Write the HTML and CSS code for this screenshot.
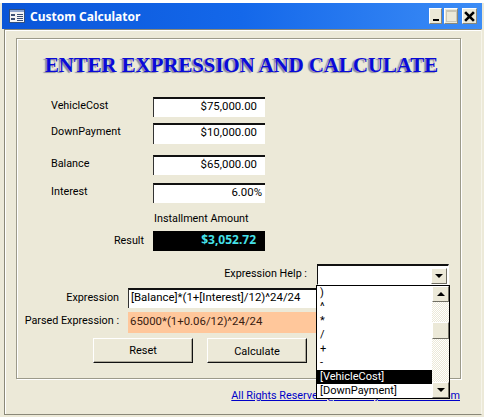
FILE: index.html
```html
<!DOCTYPE html>
<html lang="en">

<head>
    <meta charset="UTF-8">
    <title>Custom Calculator</title>
    <link rel="stylesheet" href="styles.css">
</head>

<body>
    <div class="window">
        <header class="titlebar">
            <svg class="app-icon" width="16" height="14" viewBox="0 0 16 14">
                <rect x="0.5" y="0.5" width="15" height="13" fill="#f4f4f4" stroke="#33507f"></rect>
                <rect x="1" y="1" width="14" height="2" fill="#8fa6cf"></rect>
                <rect x="2" y="5" width="4" height="2" fill="#3c4f74"></rect>
                <rect x="2" y="9" width="4" height="2" fill="#3c4f74"></rect>
                <path d="M8 5.5h6M8 7.5h6M8 9.5h6M8 11.5h6" stroke="#3c4f74" stroke-width="1"></path>
            </svg>
            <span class="title">Custom Calculator</span>
            <div class="caption-btns">
                <span class="cap-btn cap-min"></span>
                <span class="cap-btn cap-max"></span>
                <span class="cap-btn cap-close">
                    <svg width="11" height="11" viewBox="0 0 10 10">
                        <path d="M1 1l8 8M9 1l-8 8" stroke="#000" stroke-width="2.4"></path>
                    </svg>
                </span>
            </div>
        </header>

        <div class="content">
            <main class="frame">
                <h1 class="heading">ENTER EXPRESSION AND CALCULATE</h1>

                <div class="row row-cost">
                    <label class="lbl">VehicleCost</label>
                    <div class="box">$75,000.00</div>
                </div>
                <div class="row row-down">
                    <label class="lbl">DownPayment</label>
                    <div class="box box-tall">$10,000.00</div>
                </div>
                <div class="row row-balance">
                    <label class="lbl">Balance</label>
                    <div class="box">$65,000.00</div>
                </div>
                <div class="row row-interest">
                    <label class="lbl">Interest</label>
                    <div class="box box-pct">6.00%</div>
                </div>

                <div class="caption">Installment Amount</div>
                <div class="row row-result">
                    <label class="lbl lbl-result">Result</label>
                    <div class="result">$3,052.72</div>
                </div>

                <div class="row row-help">
                    <label class="lbl lbl-help">Expression Help :</label>
                    <div class="combo">
                        <div class="combo-text"></div>
                        <span class="scroll-btn combo-btn"><i class="arrow-down"></i></span>
                        <div class="droplist">
                            <ul class="items">
                                <li>)</li>
                                <li>^</li>
                                <li>*</li>
                                <li>/</li>
                                <li>+</li>
                                <li>-</li>
                                <li class="selected">[VehicleCost]</li>
                                <li>[DownPayment]</li>
                            </ul>
                            <div class="scrollbar">
                                <span class="scroll-btn"><i class="arrow-up"></i></span>
                                <div class="track"><span class="thumb"></span></div>
                                <span class="scroll-btn"><i class="arrow-down"></i></span>
                            </div>
                        </div>
                    </div>
                </div>

                <div class="row row-expr">
                    <label class="lbl lbl-expr">Expression</label>
                    <div class="box box-expr">[Balance]*(1+[Interest]/12)^24/24</div>
                </div>
                <div class="row row-parsed">
                    <label class="lbl lbl-expr">Parsed Expression :</label>
                    <div class="parsed">65000*(1+0.06/12)^24/24</div>
                </div>

                <div class="buttons">
                    <button class="btn">Reset</button>
                    <button class="btn btn-calc">Calculate</button>
                </div>
            </main>
            <footer class="rights"><a href="#">All Rights Reserved @ www.mycustomcalc.com</a></footer>
        </div>
    </div>
</body>

</html>
```

FILE: styles.css
```css
* {
    box-sizing: border-box;
}

body {
    margin: 0;
    width: 484px;
    height: 417px;
    overflow: hidden;
    background-color: #fff;
    font-family: Roboto, "Liberation Sans", sans-serif;
    font-size: 10.8px;
    color: #000;
}

.window {
    display: flex;
    flex-direction: column;
    height: 417px;
    padding: 3px 2px 2px;
    background-color: #ece9d8;
    box-shadow: inset 0 3px 0 #fff;
}

.titlebar {
    display: flex;
    align-items: center;
    height: 26px;
    padding: 0 5px 0 7px;
    background: linear-gradient(90deg, #0a55d8 0%, #1468ea 50%, #3c8cf6 100%);
    color: #fff;
}

.app-icon {
    margin-right: 5px;
}

.title {
    font-family: "Noto Sans", sans-serif;
    font-size: 12px;
    font-weight: bold;
}

.caption-btns {
    display: flex;
    gap: 2px;
    margin-left: auto;
}

.cap-btn {
    position: relative;
    display: flex;
    align-items: center;
    justify-content: center;
    width: 15px;
    height: 16px;
    background-color: #ece9d8;
    border: 1px solid;
    border-color: #fff #8a8878 #8a8878 #fff;
}

.cap-min {
    width: 13px;
}

.cap-min::after {
    content: '';
    position: absolute;
    left: 3px;
    bottom: 2px;
    width: 6px;
    height: 2px;
    background-color: #000;
}

.cap-max {
    width: 14px;
}

.cap-max::after {
    content: '';
    width: 9px;
    height: 9px;
    border: 1px solid #c9c6b6;
    border-top-width: 2px;
}

.cap-close {
    margin-left: 2px;
}

.content {
    flex: 1;
    margin: 0 0 0 2px;
    padding: 8px 0 0 11px;
    background-color: #ece9d8;
    border: 1px solid #8a8878;
    border-right-color: #f6f4ea;
    box-shadow: inset 1px 1px 0 #fff;
}

.frame {
    width: 445px;
    height: 341px;
    padding-left: 34px;
    border: 1px solid #9c9a8a;
    box-shadow: inset 1px 1px 0 #fff, 1px 1px 0 #fff;
}

.heading {
    margin: 14px 0 0 -28px;
    height: 24px;
    line-height: 24px;
    text-align: center;
    font-family: "Liberation Serif", serif;
    font-size: 20.8px;
    font-weight: bold;
    color: #0a0ad8;
    text-shadow: -2px 1px 1px #8a8a9c;
    white-space: nowrap;
}

.row {
    display: flex;
    align-items: center;
}

.row-cost {
    margin-top: 20px;
}

.row-down {
    margin-top: 6px;
}

.row-balance {
    margin-top: 11px;
}

.row-interest {
    margin-top: 8px;
}

.row-result {
    margin-top: 5px;
}

.row-help {
    margin-top: 13px;
}

.row-expr {
    margin: 3px 0 0 -34px;
}

.row-parsed {
    margin: 4px 0 0 -34px;
}

.lbl {
    width: 102px;
    margin-top: -4px;
}

.lbl-result {
    flex: none;
    width: 93px;
    margin-top: -2px;
    margin-right: 9px;
    text-align: right;
}

.lbl-help {
    width: 256px;
    margin-top: -3px;
    text-align: right;
}

.lbl-expr {
    flex: none;
    margin-top: -2px;
    text-align: right;
    white-space: nowrap;
}

.row-parsed .lbl-expr {
    margin-top: -5px;
}

.box {
    width: 112px;
    height: 20px;
    padding: 0 8px 0 0;
    line-height: 14px;
    text-align: right;
    white-space: nowrap;
    background-color: #fff;
    border-top: 2px solid #111;
    border-left: 1px solid #333;
    font-size: 11.4px;
}

.box-tall {
    height: 21px;
}

.box-pct {
    padding-right: 3px;
}

.box-expr {
    width: 188px;
    margin-left: 9px;
    padding: 0 0 0 2px;
    text-align: left;
}

.caption {
    height: 14px;
    margin: 9px 0 0 103px;
    line-height: 14px;
}

.result {
    flex: none;
    width: 112px;
    height: 20px;
    padding-right: 9px;
    line-height: 18px;
    text-align: right;
    background-color: #000;
    color: #46e0e8;
    font-family: "Noto Sans", sans-serif;
    font-size: 12px;
    font-weight: bold;
}

.combo {
    position: relative;
    display: flex;
    flex: none;
    width: 132px;
    height: 21px;
    margin-left: 10px;
    padding: 2px 1px 1px 1px;
    background-color: #fff;
    border: 1px solid #111;
    border-top-width: 2px;
    border-bottom-color: #fff;
    border-right-color: #fff;
}

.combo-text {
    flex: 1;
}

.combo-btn {
    width: 16px;
    height: 16px;
}

.scroll-btn {
    display: flex;
    flex: none;
    align-items: center;
    justify-content: center;
    height: 16px;
    background-color: #ece9d8;
    border: 1px solid;
    border-color: #fff #716f64 #716f64 #fff;
}

.arrow-down,
.arrow-up {
    width: 0;
    height: 0;
    border-left: 4px solid transparent;
    border-right: 4px solid transparent;
}

.arrow-down {
    border-top: 4px solid #000;
}

.arrow-up {
    border-bottom: 4px solid #000;
}

.droplist {
    position: absolute;
    top: 19px;
    left: -2px;
    z-index: 2;
    display: flex;
    width: 134px;
    height: 114px;
    background-color: #fff;
    border: 1px solid #000;
}

.items {
    flex: 1;
    margin: 0;
    padding: 0;
    list-style: none;
    font-size: 11px;
}

.items li {
    height: 14px;
    padding-left: 3px;
    line-height: 14px;
}

.items .selected {
    background-color: #000;
    color: #fff;
}

.scrollbar {
    display: flex;
    flex-direction: column;
    width: 17px;
}

.track {
    flex: 1;
    padding-top: 20px;
    background-color: #f3f1e7;
    background-image: repeating-conic-gradient(#ece9d8 0 25%, #fff 0 50%);
    background-size: 2px 2px;
}

.thumb {
    display: block;
    height: 17px;
    background-color: #ece9d8;
    border: 1px solid;
    border-color: #fff #716f64 #716f64 #fff;
}

.parsed {
    flex: none;
    width: 188px;
    height: 21px;
    margin-left: 9px;
    padding-left: 2px;
    line-height: 19px;
    white-space: nowrap;
    background-color: #ffc79b;
    font-size: 11.4px;
    color: #3a2010;
}

.buttons {
    display: flex;
    gap: 14px;
    margin: 5px 0 0 42px;
}

.btn {
    width: 100px;
    height: 25px;
    padding: 0;
    background-color: #ece9d8;
    border: 1px solid;
    border-color: #fff #111 #111 #fff;
    box-shadow: inset -1px -1px 0 #aca899;
    font-family: inherit;
    font-size: 11px;
    color: #000;
}

.btn-calc {
    padding-top: 2px;
}

.rights {
    width: 444px;
    padding-top: 10px;
    text-align: right;
    white-space: nowrap;
}

.rights a {
    color: #0000c8;
}
```
